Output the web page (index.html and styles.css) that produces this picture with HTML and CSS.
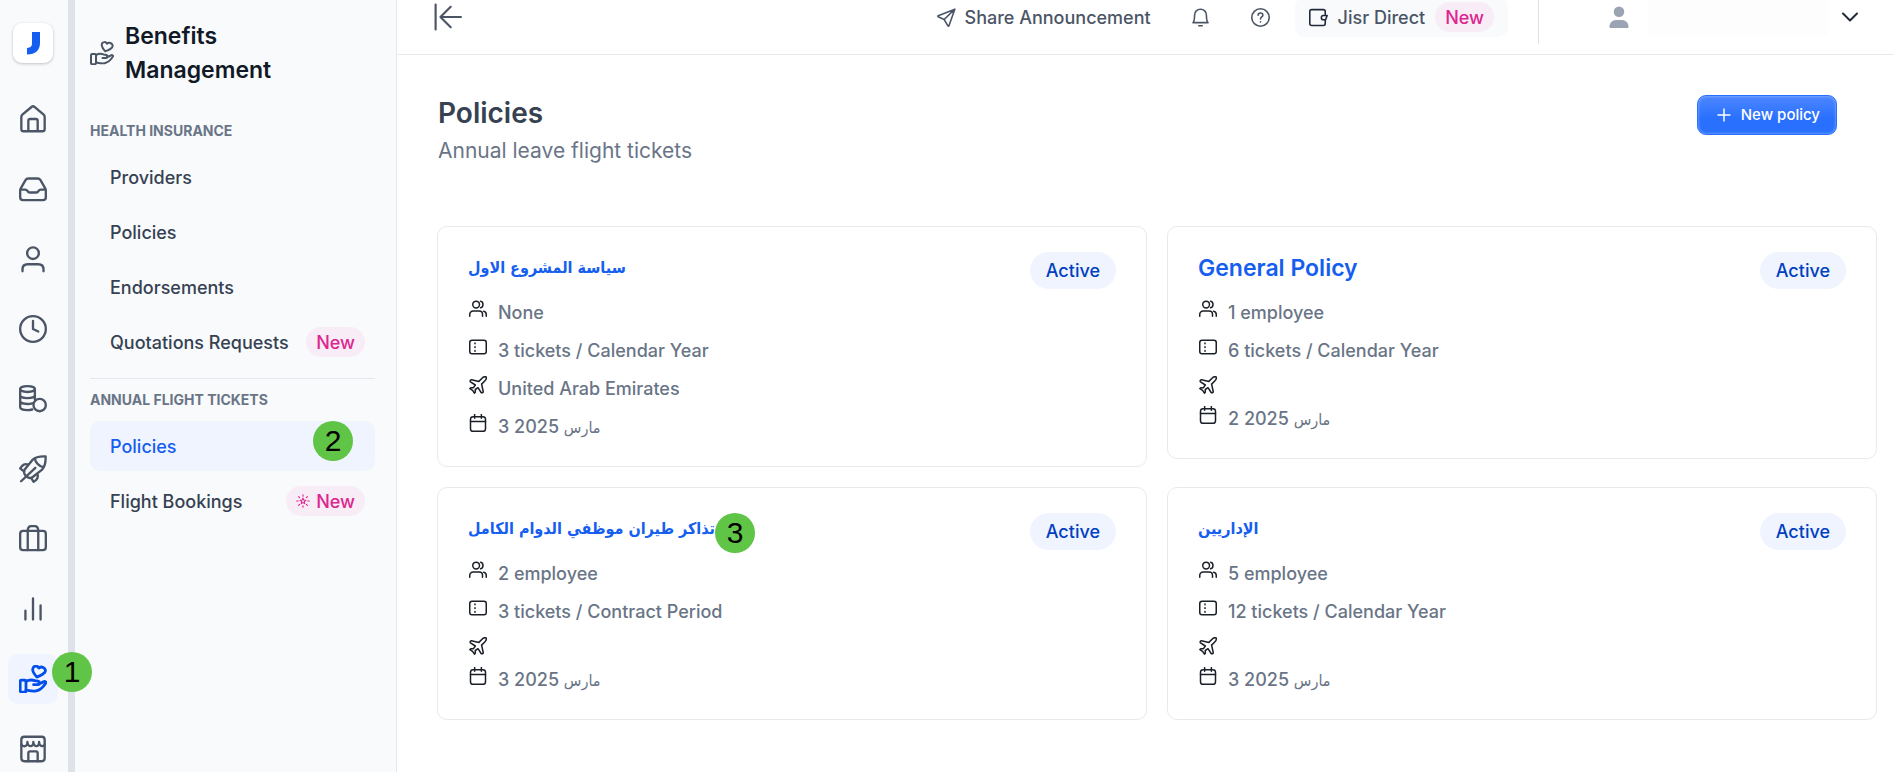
FILE: index.html
```html
<!DOCTYPE html>
<html lang="en">
<head>
<meta charset="utf-8">
<title>Policies - Benefits Management</title>
<link rel="stylesheet" href="styles.css">
</head>
<body>
<svg class="sprite" aria-hidden="true">
  <symbol id="i-home" viewBox="0 0 24 24"><path d="M2 10.2c0-.9.4-1.5 1.100-2.100L10.700 1.700c.8-.7 1.800-.7 2.600 0l7.600 6.400c.7.6 1.100 1.200 1.100 2.100V20.500c0 1.300-.8 2-2 2H4c-1.200 0-2-.7-2-2zM8 22.500v-9c0-1 .6-1.500 1.500-1.500h5c.9 0 1.500.5 1.500 1.500v9"/></symbol>
  <symbol id="i-inbox" viewBox="0 0 24 24"><path d="M1 12.500h4.300c1 0 1.500.4 1.900 1.100.5.900 1.100 1.400 2.100 1.400h5.400c1 0 1.600-.5 2.100-1.400.4-.7.900-1.100 1.900-1.100H23M5.700 4.200 1.500 11.500c-.3.600-.5 1.200-.5 1.900V19c0 1.500 1 2.500 2.500 2.500h17c1.500 0 2.500-1 2.500-2.500v-5.600c0-.7-.2-1.300-.5-1.900l-4.200-7.300c-.5-.8-1.200-1.200-2.200-1.200H7.900c-1 0-1.700.4-2.200 1.200z"/></symbol>
  <symbol id="i-user" viewBox="0 0 24 24"><circle cx="12" cy="7" r="5"/><path d="M3 22.500v-1.500c0-2.500 1.500-4.500 4.500-4.500h9c3 0 4.500 2 4.500 4.500v1.500"/></symbol>
  <symbol id="i-clock" viewBox="0 0 24 24"><circle cx="12" cy="12" r="11"/><path d="M12 5v7l4.500 2.200"/></symbol>
  <symbol id="i-coins" viewBox="0 0 24 24"><ellipse cx="7.300" cy="3.500" rx="6.300" ry="2.500"/><path d="M1 3.500v15.500c0 1.500 2.800 2.500 6.300 2.500 1.500 0 2.900-.2 4-.5M13.600 3.500v9M1 8.700c0 1.400 2.800 2.500 6.300 2.500s6.300-1.100 6.300-2.500M1 13.800c0 1.400 2.800 2.500 6.300 2.500 1.500 0 3-.2 4-.6"/><circle cx="17.700" cy="17.200" r="5.300"/></symbol>
  <symbol id="i-rocket" viewBox="0 0 24 24"><path d="M5.500 17.500c-1.600-2-1.600-3.300-.6-5L11.500 4.200C14 1.700 18 1 22.800 1.200 23 6 22.300 10 19.800 12.500L11.500 19.100c-1.700 1-3 1-5-.6M13.500 2.800c.5 3.500 4 7.200 7.700 7.700M14 11 1.800 22.500M8 8.500c-2-1.200-4-.6-5.500 1L1 11.500l3.500 2.700M15.500 16c1.200 2 .6 4-1 5.500l-2 1.500-2.200-3.500"/></symbol>
  <symbol id="i-case" viewBox="0 0 24 24"><rect x="1" y="5" width="22" height="16.500" rx="2.500"/><path d="M7.500 21.500V5c0-2.500 1-4 3-4h3c2 0 3 1.500 3 4v16.500"/></symbol>
  <symbol id="i-bars" viewBox="0 0 24 24"><path d="M5.500 13.500v7.500M12 3v18M18.500 9v12"/></symbol>
  <symbol id="i-hand" viewBox="0 0 24 24"><rect x="1" y="13" width="5" height="10.200" rx="1.200"/><path d="M6 14c2.500-1.300 5-1.500 7.500-.6l2.900.5c1.600.3 1.600 3-.1 3h-3.800M16.800 16c1.600-.3 3-1 4.200-1.700 1.300-.7 2.600.3 1.600 1.700-2 3-4.500 5.500-8 6.200-3 .6-5.800-.2-8.600-.7"/><path d="M15.300 10.300c-1.800-2-3.200-3.700-3.500-5.700-.3-2 .8-3.500 2.500-3.600 1.200-.1 2 .5 2.700 1.600 1-.8 2.200-1.100 3.400-.6 2 .8 2.900 2.700 1.700 4.300-1.300 1.800-4 2.800-6.800 4z"/></symbol>
  <symbol id="i-store" viewBox="0 0 24 24"><rect x="2" y="1.500" width="20" height="21" rx="2.500"/><path d="M2 8c.5 1.800 3.400 2.200 4.500.7.600-.7.700-1.500.7-2.700.1 1.200.4 2 1 2.700 1.100 1.300 2.900 1 3.500-.1.500-.7.600-1.500.6-2.600.1 1.200.4 2 1 2.700 1 1.200 2.800 1 3.400-.1.400-.7.500-1.500.5-2.600.1 1.200.4 2 1 2.700 1 1.200 3.500 1 3.800-.7M8 22.500V15.500c0-1 .5-1.500 1.500-1.500h5c1 0 1.500.5 1.500 1.500v7"/></symbol>
  <symbol id="i-collapse" viewBox="0 0 26 26"><path d="M1.500 1.500v23M25 13H6M15.500 3.500 6 13l9.500 9.500"/></symbol>
  <symbol id="i-send" viewBox="0 0 24 24"><path d="M22.500 1.500 1.500 9.700c-.6.3-.6 1.100 0 1.300l7.500 3.500 4.800 8c.3.600 1.100.5 1.300-.1zM22.500 1.500 9 14.500"/></symbol>
  <symbol id="i-bell" viewBox="0 0 24 24"><path d="M2.500 18.500c1.700-2 2-4 2-9.500C4.500 4.700 7.800 1.500 12 1.500S19.500 4.700 19.500 9c0 5.500.3 7.500 2 9.500zM9.800 22.500h4.400"/></symbol>
  <symbol id="i-help" viewBox="0 0 24 24"><circle cx="12" cy="12" r="11"/><path d="M9 9.200c0-1.700 1.300-2.900 3-2.900s3 1.200 3 2.800c0 2.100-3 2.300-3 4.700M12 17.500v.2"/></symbol>
  <symbol id="i-wallet" viewBox="0 0 24 24"><path d="M20.500 8V4.500c0-1.500-1-2.500-2.500-2.500H3.500C2 2 1 3 1 4.500v15C1 21 2 22 3.500 22H18c1.500 0 2.500-1 2.500-2.500V16M22.900 9.500H18.300a2.700 2.700 0 0 0 0 5.400h2.700z"/></symbol>
  <symbol id="i-chev" viewBox="0 0 16 10"><path d="m1 1.500 7 7 7-7"/></symbol>
  <symbol id="i-plus" viewBox="0 0 14 14"><path d="M7 .5v13M.5 7h13"/></symbol>
  <symbol id="i-spark" viewBox="0 0 16 16"><path d="m8 5 .9 1.900 2.100.3-1.500 1.500.3 2.100L8 9.800l-1.800 1 .3-2.100L5 7.200l2.100-.3zM8 .8v1.700M8 13.500v1.700M.8 8h1.700M13.500 8h1.700M3 3l1.100 1.100M11.900 11.900 13 13M3 13l1.100-1.100M11.900 4.100 13 3"/></symbol>
  <symbol id="i-users" viewBox="0 0 24 24"><circle cx="9.500" cy="6" r="4.500"/><path d="M1 21.500v-2.500c0-2.500 2-4.300 4.500-4.300h8c2.500 0 4.500 1.800 4.500 4.300v2.500M15.500 1.600c4.200 1 4.200 7.700 0 8.700M19.500 15c2.100.5 3.500 2.200 3.500 4.200v2.300"/></symbol>
  <symbol id="i-ticket" viewBox="0 0 24 24"><rect x="1" y="3" width="22" height="18" rx="3"/><path d="M8 6.500v1M8 11.500v1M8 16.500v1"/></symbol>
  <symbol id="i-plane" viewBox="2 2 20 20"><path d="M17.800 19.200 16 11l3.500-3.500C21 6 21.500 4 21 3c-1-.5-3 0-4.500 1.500L13 8 4.800 6.200c-.5-.1-.9.100-1.100.5l-.3.500c-.2.500-.1 1 .3 1.300L9 12l-2 3H4l-1 1 3 2 2 3 1-1v-3l3-2 3.500 5.300c.3.400.8.500 1.300.3l.5-.2c.4-.3.6-.7.5-1.200z"/></symbol>
  <symbol id="i-cal" viewBox="0 0 24 24"><rect x="2" y="3.500" width="20" height="19.500" rx="3.500"/><path d="M2 10h20M7.500.8v5M16.500.8v5"/></symbol>
</svg>

<div class="app">
  <nav class="rail" aria-label="Modules">
    <a class="logo" href="#" aria-label="Jisr"><svg viewBox="0 0 13 23"><path d="M5 0h8v11c0 7-4.500 11.500-13 11.500V16c3.500-.2 5-1.700 5-5z"/></svg></a>
    <a class="rail-item" href="#" aria-label="Home"><svg class="icon"><use href="#i-home"/></svg></a>
    <a class="rail-item" href="#" aria-label="Inbox"><svg class="icon"><use href="#i-inbox"/></svg></a>
    <a class="rail-item" href="#" aria-label="People"><svg class="icon"><use href="#i-user"/></svg></a>
    <a class="rail-item" href="#" aria-label="Time"><svg class="icon"><use href="#i-clock"/></svg></a>
    <a class="rail-item" href="#" aria-label="Payroll"><svg class="icon"><use href="#i-coins"/></svg></a>
    <a class="rail-item" href="#" aria-label="Performance"><svg class="icon"><use href="#i-rocket"/></svg></a>
    <a class="rail-item" href="#" aria-label="Recruitment"><svg class="icon"><use href="#i-case"/></svg></a>
    <a class="rail-item" href="#" aria-label="Reports"><svg class="icon"><use href="#i-bars"/></svg></a>
    <a class="rail-item current" href="#" aria-label="Benefits"><svg class="icon"><use href="#i-hand"/></svg><span class="marker marker-rail">1</span></a>
    <a class="rail-item" href="#" aria-label="Marketplace"><svg class="icon"><use href="#i-store"/></svg></a>
  </nav>

  <aside class="sidebar">
    <div class="side-head">
      <svg class="icon side-icon"><use href="#i-hand"/></svg>
      <h2 class="side-title">Benefits Management</h2>
    </div>
    <h3 class="side-label">HEALTH INSURANCE</h3>
    <nav class="side-nav" aria-label="Health insurance">
      <a class="side-link" href="#">Providers</a>
      <a class="side-link" href="#">Policies</a>
      <a class="side-link" href="#">Endorsements</a>
      <a class="side-link" href="#">Quotations Requests <span class="new">New</span></a>
    </nav>
    <h3 class="side-label second">ANNUAL FLIGHT TICKETS</h3>
    <nav class="side-nav" aria-label="Annual flight tickets">
      <a class="side-link current" href="#">Policies<span class="marker marker-side">2</span></a>
      <a class="side-link" href="#">Flight Bookings <span class="new"><svg class="spark"><use href="#i-spark"/></svg>New</span></a>
    </nav>
  </aside>

  <div class="content">
    <header class="topbar">
      <button class="plain collapse" aria-label="Collapse menu"><svg class="icon"><use href="#i-collapse"/></svg></button>
      <button class="plain share"><svg class="icon small"><use href="#i-send"/></svg>Share Announcement</button>
      <button class="plain bell" aria-label="Notifications"><svg class="icon small"><use href="#i-bell"/></svg></button>
      <button class="plain help" aria-label="Help"><svg class="icon small"><use href="#i-help"/></svg></button>
      <a class="direct" href="#"><svg class="icon small dark"><use href="#i-wallet"/></svg>Jisr Direct <span class="new">New</span></a>
      <span class="rule"></span>
      <button class="plain account" aria-label="Account">
        <svg class="avatar" viewBox="0 0 20 24"><circle cx="10" cy="6" r="5.500"/><path d="M1 23c-.6 0-1-.4-1-1 0-4.500 3-7.500 7-7.500h6c4 0 7 3 7 7.500 0 .6-.4 1-1 1z"/></svg>
        <span class="account-name"></span>
        <svg class="chev"><use href="#i-chev"/></svg>
      </button>
    </header>

    <main class="main">
      <div class="page-head">
        <div>
          <h1 class="page-title">Policies</h1>
          <p class="page-sub">Annual leave flight tickets</p>
        </div>
        <button class="primary"><svg class="plus"><use href="#i-plus"/></svg>New policy</button>
      </div>

      <div class="cards">
        <article class="card">
          <div class="card-head"><a class="card-title arabic" lang="ar" href="#">سياسة المشروع الاول</a><span class="status">Active</span></div>
          <ul class="facts">
            <li><svg class="icon fact-icon"><use href="#i-users"/></svg>None</li>
            <li><svg class="icon fact-icon"><use href="#i-ticket"/></svg>3 tickets / Calendar Year</li>
            <li><svg class="icon fact-icon plane"><use href="#i-plane"/></svg>United Arab Emirates</li>
            <li><svg class="icon fact-icon"><use href="#i-cal"/></svg><span>3 <span class="month">مارس</span> 2025</span></li>
          </ul>
        </article>
        <article class="card">
          <div class="card-head"><a class="card-title" href="#">General Policy</a><span class="status">Active</span></div>
          <ul class="facts">
            <li><svg class="icon fact-icon"><use href="#i-users"/></svg>1 employee</li>
            <li><svg class="icon fact-icon"><use href="#i-ticket"/></svg>6 tickets / Calendar Year</li>
            <li><svg class="icon fact-icon plane"><use href="#i-plane"/></svg></li>
            <li><svg class="icon fact-icon"><use href="#i-cal"/></svg><span>2 <span class="month">مارس</span> 2025</span></li>
          </ul>
        </article>
        <article class="card">
          <div class="card-head"><a class="card-title arabic" lang="ar" href="#">تذاكر طيران موظفي الدوام الكامل<span class="marker marker-card">3</span></a><span class="status">Active</span></div>
          <ul class="facts">
            <li><svg class="icon fact-icon"><use href="#i-users"/></svg>2 employee</li>
            <li><svg class="icon fact-icon"><use href="#i-ticket"/></svg>3 tickets / Contract Period</li>
            <li><svg class="icon fact-icon plane"><use href="#i-plane"/></svg></li>
            <li><svg class="icon fact-icon"><use href="#i-cal"/></svg><span>3 <span class="month">مارس</span> 2025</span></li>
          </ul>
        </article>
        <article class="card">
          <div class="card-head"><a class="card-title arabic" lang="ar" href="#">الإداريين</a><span class="status">Active</span></div>
          <ul class="facts">
            <li><svg class="icon fact-icon"><use href="#i-users"/></svg>5 employee</li>
            <li><svg class="icon fact-icon"><use href="#i-ticket"/></svg>12 tickets / Calendar Year</li>
            <li><svg class="icon fact-icon plane"><use href="#i-plane"/></svg></li>
            <li><svg class="icon fact-icon"><use href="#i-cal"/></svg><span>3 <span class="month">مارس</span> 2025</span></li>
          </ul>
        </article>
      </div>
    </main>
  </div>
</div>
</body>
</html>
```
FILE: styles.css
```css
* { box-sizing: border-box; }

body {
  margin: 0;
  font-family: Inter, "DejaVu Sans", sans-serif;
  font-size: 18px;
  font-weight: 500;
  color: #364152;
  background: #fff;
}

h1, h2, h3, p, ul { margin: 0; padding: 0; }
ul { list-style: none; }
a { color: inherit; text-decoration: none; }

.sprite { display: none; }

.icon {
  flex: none;
  width: 28px;
  height: 28px;
  fill: none;
  stroke: currentColor;
  stroke-width: 2;
  stroke-linecap: round;
  stroke-linejoin: round;
}
.icon.small { width: 19px; height: 19px; }
.icon.dark { color: #202939; }

.app {
  display: flex;
  height: 100vh;
  overflow: hidden;
}

/* module rail */
.rail {
  flex: none;
  display: flex;
  flex-direction: column;
  align-items: center;
  gap: 20px;
  width: 75px;
  padding: 23px 2px 0 0;
  background: #f8fafc;
  border-right: 7px solid #dfe2e8;
  color: #4b5565;
}
.logo {
  flex: none;
  display: flex;
  align-items: center;
  justify-content: center;
  width: 40px;
  height: 40px;
  margin-bottom: 11px;
  background: #fff;
  border-radius: 9px;
  box-shadow: 0 1px 3px rgba(16, 24, 40, 0.25);
}
.logo svg { width: 13px; height: 23px; fill: #155eef; }
.rail-item {
  position: relative;
  flex: none;
  display: flex;
  align-items: center;
  justify-content: center;
  width: 50px;
  height: 50px;
  border-radius: 10px;
}
.rail-item.current { background: #eff4ff; color: #004eeb; }
.rail-item.current .icon { stroke-width: 2.400; }

/* numbered callouts */
.marker {
  position: absolute;
  z-index: 2;
  width: 40px;
  height: 40px;
  border-radius: 50%;
  background: #60c446;
  color: #000;
  font: 400 30px/40px "Liberation Sans", sans-serif;
  text-align: center;
}
.marker-rail { left: 44px; top: -2px; }
.marker-side { right: 22px; top: 0; }
.marker-card { left: 100%; top: 0; }

/* section sidebar */
.sidebar {
  flex: none;
  width: 322px;
  padding: 19px 21px 0 15px;
  background: #f8fafc;
  border-right: 1px solid #e3e8ef;
}
.side-head {
  display: flex;
  align-items: center;
  gap: 11px;
  color: #4b5565;
}
.side-icon { width: 24px; height: 24px; }
.side-title {
  width: 180px;
  font-size: 23px;
  font-weight: 600;
  line-height: 34px;
  color: #121926;
}
.side-label {
  margin-top: 34px;
  font-size: 14px;
  font-weight: 700;
  line-height: 20px;
  color: #697586;
}
.side-label.second {
  margin-top: 11px;
  padding-top: 11px;
  border-top: 1px solid #e3e8ef;
}
.side-nav {
  display: flex;
  flex-direction: column;
  gap: 5px;
  margin-top: 11px;
}
.side-link {
  position: relative;
  display: flex;
  align-items: center;
  justify-content: space-between;
  height: 50px;
  padding: 0 10px 0 20px;
  border-radius: 10px;
  white-space: nowrap;
}
.side-link.current { background: #eff4ff; color: #155eef; }
.new {
  display: inline-flex;
  align-items: center;
  gap: 6px;
  height: 30px;
  padding: 0 10px;
  border-radius: 15px;
  background: #f8ecf6;
  color: #dd2590;
}
.spark {
  width: 14px;
  height: 14px;
  fill: none;
  stroke: currentColor;
  stroke-width: 1.300;
  stroke-linecap: round;
}

/* top bar */
.content { flex: 1; min-width: 0; }
.topbar {
  display: flex;
  align-items: center;
  height: 55px;
  padding: 0 36px 20px 37px;
  overflow: hidden;
  border-bottom: 1px solid #e9eaec;
  color: #4b5565;
  white-space: nowrap;
}
.plain {
  display: flex;
  align-items: center;
  padding: 0;
  border: 0;
  background: none;
  color: inherit;
  font: inherit;
}
.collapse { margin-right: auto; }
.share { gap: 9px; }
.bell { margin-left: 40px; }
.help { margin-left: 41px; }
.direct {
  display: flex;
  align-items: center;
  gap: 10px;
  height: 40px;
  margin-left: 25px;
  padding: 0 14px;
  border-radius: 10px;
  background: #f8fafc;
}
.rule {
  width: 1px;
  height: 54px;
  margin-left: 30px;
  background: #dfe2e8;
}
.account { margin-left: 70px; }
.avatar { width: 20px; height: 23px; fill: #9aa4b5; }
.account-name {
  width: 180px;
  height: 38px;
  margin: 0 14px 0 19px;
  background: #fdfdfd;
}
.chev {
  width: 16px;
  height: 10px;
  fill: none;
  stroke: #202939;
  stroke-width: 2;
  stroke-linecap: round;
  stroke-linejoin: round;
}

/* page */
.main { padding: 38px 17px 0 40px; }
.page-head {
  display: flex;
  justify-content: space-between;
  align-items: flex-start;
  padding: 0 40px 0 1px;
}
.page-title {
  font-size: 28px;
  font-weight: 600;
  line-height: 40px;
}
.page-sub {
  font-size: 21px;
  font-weight: 400;
  line-height: 36px;
  color: #697586;
}
.primary {
  display: flex;
  align-items: center;
  justify-content: center;
  gap: 10px;
  height: 40px;
  margin-top: 2px;
  padding: 0 16px 0 19px;
  border: 1px solid #2970ff;
  border-radius: 9px;
  background: linear-gradient(#4c86ff, #2970ff 60%);
  box-shadow: inset 0 0 3px rgba(255, 255, 255, 0.5);
  color: #fff;
  font: 500 15px/24px Inter, sans-serif;
}
.plus { width: 14px; height: 14px; stroke: currentColor; stroke-width: 1.500; }

.cards {
  display: grid;
  grid-template-columns: 1fr 1fr;
  align-items: start;
  gap: 20px;
  margin-top: 57px;
}
.card {
  padding: 25px 30px 13px;
  border: 1px solid #e9eaec;
  border-radius: 10px;
}
.card-head {
  display: flex;
  justify-content: space-between;
  align-items: flex-start;
}
.card-title {
  position: relative;
  font-size: 23px;
  font-weight: 600;
  line-height: 32px;
  color: #155eef;
}
.card-title.arabic { font-family: "DejaVu Sans Condensed", "DejaVu Sans", sans-serif; font-size: 16px; font-weight: 700; }
.status {
  padding: 0 16px;
  border-radius: 19px;
  background: #eff4ff;
  color: #0040c1;
  line-height: 37px;
}
.facts { margin-top: 11px; color: #697586; }
.facts li {
  display: flex;
  align-items: flex-start;
  gap: 10px;
  margin-bottom: 12px;
  line-height: 26px;
}
.fact-icon { width: 20px; height: 18px; color: #1b1f27; }
.plane { stroke-width: 1.700; }
.month { font-family: "DejaVu Sans Condensed", "DejaVu Sans", sans-serif; font-size: 16px; font-weight: 400; }
```
